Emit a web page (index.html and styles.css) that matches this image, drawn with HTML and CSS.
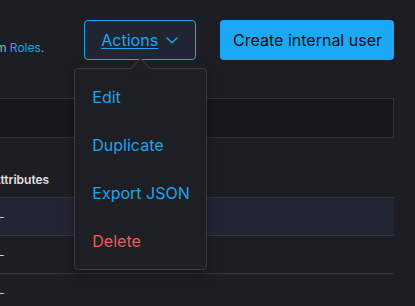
FILE: index.html
```html
<!DOCTYPE html>
<html lang="en">
<head>
<meta charset="utf-8">
<title>Internal users</title>
<link rel="stylesheet" href="styles.css">
</head>
<body>
<div class="page">
  <header class="head">
    <div class="intro">
      <p class="desc">Manage internal users and map their permissions from <a class="link" href="#">Roles</a>.</p>
    </div>
    <div class="actions">
      <div class="menu-wrap">
        <button class="btn-outline" type="button">
          <span class="label">Actions</span>
          <svg class="chev" width="12" height="7" viewBox="0 0 12 7" aria-hidden="true"><path d="M0.8 0.8 L6 5.8 L11.2 0.8" fill="none" stroke="currentColor" stroke-width="1.4" stroke-linecap="round" stroke-linejoin="round"/></svg>
        </button>
        <div class="dropdown">
          <a class="item" href="#">Edit</a>
          <a class="item" href="#">Duplicate</a>
          <a class="item" href="#">Export JSON</a>
          <a class="item danger" href="#">Delete</a>
        </div>
      </div>
      <button class="btn-primary" type="button">Create internal user</button>
    </div>
  </header>

  <div class="search"></div>

  <table class="table">
    <thead>
      <tr><th class="col-user">Username</th><th>Attributes</th></tr>
    </thead>
    <tbody>
      <tr class="hover"><td>admin</td><td class="dash">-</td></tr>
      <tr><td>kibanaserver</td><td class="dash">-</td></tr>
      <tr><td>logstash</td><td class="dash">-</td></tr>
    </tbody>
  </table>
</div>
</body>
</html>
```
FILE: styles.css
```css
html, body {
  margin: 0;
  height: 306px;
  overflow: hidden;
  background: #1d1e23;
}
body {
  font-family: Inter, "Noto Sans", sans-serif;
  color: #dfe1e6;
}
.page {
  margin-left: -260px;
  padding: 20px 21px 0 0;
}
.head {
  display: flex;
  align-items: flex-start;
}
.intro {
  flex: 1;
  display: flex;
  justify-content: flex-end;
  margin-right: 40px;
  padding-top: 18px;
  min-width: 0;
}
.desc {
  margin: 0;
  font-size: 12px;
  line-height: 20px;
  color: #a7aab1;
  white-space: nowrap;
}
.link {
  color: #1fa3ef;
  text-decoration: none;
}
.actions {
  display: flex;
  gap: 24px;
}
.menu-wrap {
  position: relative;
}
.btn-outline {
  box-sizing: border-box;
  height: 40px;
  padding: 0 17px 0 16px;
  display: flex;
  align-items: center;
  gap: 8px;
  border: 1px solid #1ea5f2;
  border-radius: 4px;
  background: #1f2531;
  color: #21a5f0;
  font-family: Inter, "Noto Sans", sans-serif;
  font-size: 16px;
  line-height: 20px;
}
.label {
  text-decoration: underline;
  text-decoration-thickness: 1px;
  text-underline-offset: 2px;
}
.chev {
  display: block;
}
.btn-primary {
  box-sizing: border-box;
  height: 40px;
  padding: 0 12px 0 13px;
  border: none;
  border-radius: 4px;
  background: #1ba8f4;
  color: #0c1015;
  font-family: Inter, "Noto Sans", sans-serif;
  font-size: 16px;
  line-height: 20px;
}
.dropdown {
  position: absolute;
  top: 48px;
  left: -10px;
  width: 133px;
  box-sizing: border-box;
  padding: 4px 0;
  border: 1px solid #3a3c42;
  border-radius: 4px;
  background: #1e1f24;
  box-shadow: 0 4px 12px rgba(0, 0, 0, 0.35);
  z-index: 2;
}
.dropdown::before {
  content: "";
  position: absolute;
  top: -8px;
  left: 58px;
  width: 15px;
  height: 15px;
  box-sizing: border-box;
  background: #1e1f24;
  border-left: 1px solid #3a3c42;
  border-top: 1px solid #3a3c42;
  transform: rotate(45deg);
}
.item {
  display: flex;
  align-items: center;
  height: 48px;
  padding-left: 17px;
  font-size: 16px;
  color: #1fa3ef;
  text-decoration: none;
}
.item.danger {
  color: #f25757;
}
.search {
  margin-top: 38px;
  height: 40px;
  box-sizing: border-box;
  border: 1px solid #34353b;
  background: #17181c;
}
.table {
  margin-top: 22px;
  width: 100%;
  border-collapse: collapse;
  table-layout: fixed;
  font-size: 12px;
  line-height: 20px;
}
.table th {
  text-align: left;
  font-weight: 600;
  color: #dfe1e6;
  padding: 10px 12px 7px;
  border-bottom: 1px solid #34363c;
}
.col-user {
  width: 240px;
  box-sizing: border-box;
}
.table td {
  height: 37px;
  padding: 0 12px;
  border-bottom: 1px solid #34363c;
  color: #d4d6db;
  vertical-align: middle;
}
.table td.dash {
  padding-left: 19px;
}
.hover td {
  background: #222533;
}
```
